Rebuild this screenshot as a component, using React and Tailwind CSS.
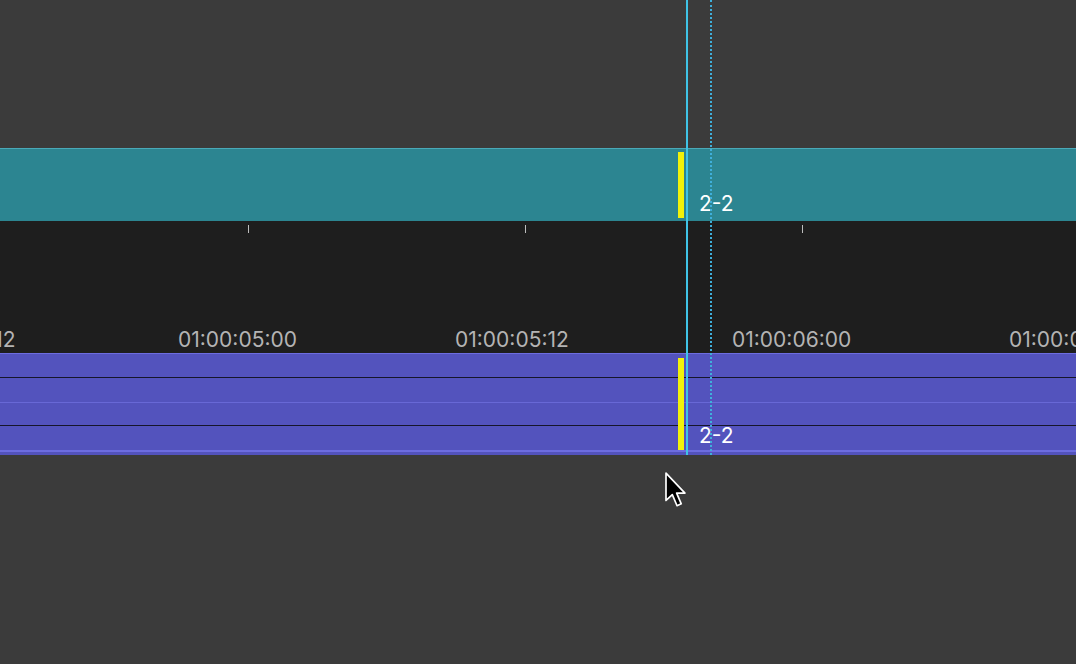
import React from "react";

const labels = ["01:00:04:12", "01:00:05:00", "01:00:05:12", "01:00:06:00", "01:00:06:12"];

function Cursor() {
  return (
    <svg width="26" height="40" viewBox="0 0 24 38" className="absolute left-[663px] top-[471px]">
      <path
        d="M2.5 2 L2.5 28 L8.5 22.5 L13 33 L17 31.2 L12.6 21 L20.5 21 Z"
        fill="#000"
        stroke="#fff"
        strokeWidth="1.6"
        strokeLinejoin="round"
      />
    </svg>
  );
}

export default function App() {
  return (
    <div className="relative w-full h-[664px] overflow-hidden bg-[#3b3b3b]" style={{ fontFamily: "Inter, 'Liberation Sans', sans-serif" }}>
      <div className="h-[148px]" />

      {/* video clip */}
      <div className="relative h-[73px] bg-[#2c8591] border-t border-[#4aa9b8]">
        <div className="absolute left-[678px] top-[3px] w-[6px] h-[66px] bg-[#f2f20a]" />
        <div className="absolute left-[699px] top-[43px] text-white text-[21px] leading-[24px]">2-2</div>
      </div>

      {/* ruler */}
      <div className="h-[132px] bg-[#1e1e1e] flex flex-col">
        <div className="flex ml-[-28px] pt-[4px]">
          {[0, 1, 2, 3].map((i) => (
            <div key={i} className="w-[277px] shrink-0 h-[8px] flex justify-end">
              <div className="w-[1.5px] h-[8px] bg-[#bdbdbd]" />
            </div>
          ))}
        </div>
        <div className="flex-1" />
        <div className="flex ml-[-99px]">
          {labels.map((l) => (
            <div key={l} className="w-[277px] shrink-0 text-[21px] leading-[26px] text-[#b4b4b4] whitespace-nowrap">
              {l}
            </div>
          ))}
        </div>
      </div>

      {/* audio clip */}
      <div className="relative h-[102px] bg-[#5353bd] border-t border-[#6d6de0] flex flex-col">
        <div className="h-[23px]" />
        <div className="h-[1px] bg-[#16162a]" />
        <div className="h-[24px]" />
        <div className="h-[1px] bg-[#6868d6]" />
        <div className="h-[23px]" />
        <div className="h-[1px] bg-[#16162a]" />
        <div className="h-[24px]" />
        <div className="h-[2px] bg-[#6d6de0]" />
        <div className="h-[3px]" />
        <div className="absolute left-[678px] top-[4px] w-[6px] h-[92px] bg-[#f2f20a]" />
        <div className="absolute left-[699px] top-[70px] text-white text-[21px] leading-[24px]">2-2</div>
      </div>

      {/* playhead + skimmer */}
      <div className="absolute left-[686px] top-0 w-[1.5px] h-[455px] bg-[#3fc3e6]" />
      <div className="absolute left-[710px] top-0 h-[455px] border-l-2 border-dotted border-[#3fb0dc] w-0" />

      <Cursor />
    </div>
  );
}
